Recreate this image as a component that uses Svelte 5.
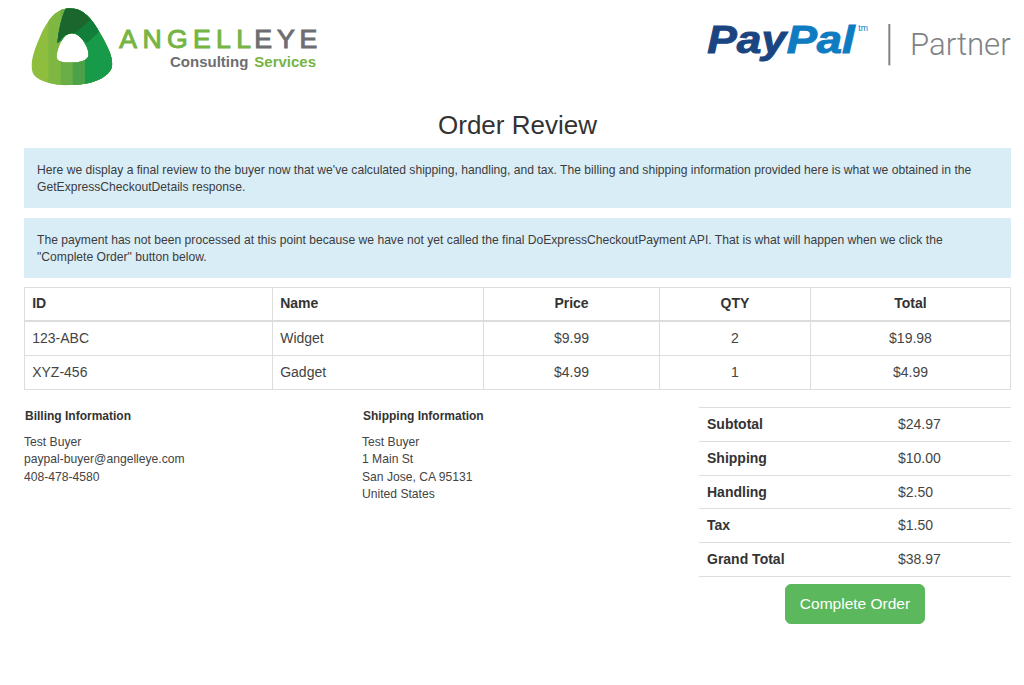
<script>
  const items = [
    { id: '123-ABC', name: 'Widget', price: '$9.99', qty: 2, total: '$19.98' },
    { id: 'XYZ-456', name: 'Gadget', price: '$4.99', qty: 1, total: '$4.99' }
  ];
  const totals = [
    ['Subtotal', '$24.97'],
    ['Shipping', '$10.00'],
    ['Handling', '$2.50'],
    ['Tax', '$1.50'],
    ['Grand Total', '$38.97']
  ];
</script>

<div class="page">
  <header class="top">
    <svg class="logo" viewBox="0 0 930 300" aria-label="Angell Eye Consulting Services">
      <defs>
        <clipPath id="outer">
          <path clip-rule="evenodd" d="M150 25C110 25 85 55 60 110C35 165 28 205 42 225C58 246 110 258 155 255C200 255 255 240 272 210C285 188 270 150 240 100C215 55 190 25 150 25ZM155 100C140 100 125 115 115 145C108 168 106 180 125 185C145 190 175 188 190 182C210 175 208 160 200 140C185 110 170 100 155 100Z" />
        </clipPath>
      </defs>
      <g clip-path="url(#outer)">
        <rect x="20" y="0" width="280" height="300" fill="#8fbe3f" />
        <rect x="85" y="0" width="215" height="300" fill="#7fb743" />
        <rect x="122" y="0" width="178" height="300" fill="#6bad47" />
        <rect x="158" y="0" width="142" height="300" fill="#4ba248" />
        <rect x="195" y="0" width="105" height="300" fill="#189a4b" />
        <path d="M112 130C116 90 124 50 140 20L300 20L300 70L240 95L195 135L160 100Z" fill="#189a4b" />
        <path d="M112 130C116 90 124 50 140 20L230 20L240 93L200 130L165 100L135 105Z" fill="#117f3a" />
        <path d="M112 130C116 90 124 50 140 20L190 20L210 60L165 100L135 105Z" fill="#1a662d" />
      </g>
      <text class="angell green" x="298" y="145" textLength="395" lengthAdjust="spacing">ANGELL</text>
      <text class="angell grey" x="703" y="145" textLength="189" lengthAdjust="spacing">EYE</text>
      <text class="consult" x="450" y="200" textLength="235" lengthAdjust="spacingAndGlyphs" fill="#6d6e71">Consulting</text>
      <text class="consult" x="703" y="200" textLength="185" lengthAdjust="spacingAndGlyphs" fill="#76b444">Services</text>
    </svg>
    <svg class="partner" viewBox="0 0 1002 210" aria-label="PayPal Partner">
      <text class="pp blue" x="52" y="130" textLength="236" lengthAdjust="spacingAndGlyphs">Pay</text>
      <text class="pp sky" x="290" y="130" textLength="204" lengthAdjust="spacingAndGlyphs">Pal</text>
      <text class="tm" x="505" y="62" fill="#0f7cc1">tm</text>
      <rect x="595" y="42" width="6" height="124" fill="#808285" />
      <text class="pt" x="660" y="135" textLength="302" lengthAdjust="spacingAndGlyphs" fill="#808285">Partner</text>
    </svg>
  </header>

  <h1>Order Review</h1>

  <div class="alert">Here we display a final review to the buyer now that we've calculated shipping, handling, and tax. The billing and shipping information provided here is what we obtained in the GetExpressCheckoutDetails response.</div>
  <div class="alert">The payment has not been processed at this point because we have not yet called the final DoExpressCheckoutPayment API. That is what will happen when we click the "Complete Order" button below.</div>

  <table class="items">
    <colgroup>
      <col class="c1" /><col class="c2" /><col class="c3" /><col class="c4" /><col class="c5" />
    </colgroup>
    <thead>
      <tr><th>ID</th><th>Name</th><th class="mid">Price</th><th class="mid">QTY</th><th class="mid">Total</th></tr>
    </thead>
    <tbody>
      {#each items as it}
        <tr><td>{it.id}</td><td>{it.name}</td><td class="mid">{it.price}</td><td class="mid">{it.qty}</td><td class="mid">{it.total}</td></tr>
      {/each}
    </tbody>
  </table>

  <div class="bottom">
    <section>
      <h5>Billing Information</h5>
      <p>Test Buyer<br />paypal-buyer@angelleye.com<br />408-478-4580</p>
    </section>
    <section>
      <h5>Shipping Information</h5>
      <p>Test Buyer<br />1 Main St<br />San Jose, CA 95131<br />United States</p>
    </section>
    <section class="right">
      <table class="totals">
        <tbody>
          {#each totals as [label, value]}
            <tr><th>{label}</th><td>{value}</td></tr>
          {/each}
        </tbody>
      </table>
      <button type="button">Complete Order</button>
    </section>
  </div>
</div>

<style>
  :global(body) {
    margin: 0;
    background: #fff;
  }
  .page {
    box-sizing: border-box;
    width: 1024px;
    height: 685px;
    padding: 0 13px 0 24px;
    font-family: "Liberation Sans", Arial, sans-serif;
    color: #444;
    overflow: hidden;
  }
  .top {
    display: flex;
    justify-content: space-between;
    align-items: flex-start;
    height: 100px;
    margin: 0 -13px 0 -4px;
  }
  .logo {
    width: 310px;
    height: 100px;
    display: block;
  }
  .partner {
    width: 334px;
    height: 70px;
    margin-top: 10px;
    display: block;
  }
  .angell {
    font-size: 80px;
    font-weight: 400;
    stroke-width: 3px;
  }
  .green {
    fill: #76b444;
    stroke: #76b444;
  }
  .grey {
    fill: #6d6e71;
    stroke: #6d6e71;
  }
  .consult {
    font-size: 46px;
    font-weight: 700;
  }
  .pp {
    font-size: 118px;
    font-weight: 700;
    font-style: italic;
    stroke-width: 3px;
  }
  .blue {
    fill: #1a4580;
    stroke: #1a4580;
  }
  .sky {
    fill: #0f7cc1;
    stroke: #0f7cc1;
  }
  .tm {
    font-size: 26px;
  }
  .pt {
    font-family: Roboto, "Liberation Sans", sans-serif;
    font-size: 94px;
    font-weight: 300;
  }
  h1 {
    margin: 10px 0 8px;
    font-size: 26px;
    font-weight: 400;
    line-height: 30px;
    text-align: center;
    color: #333;
  }
  .alert {
    background: #d9edf7;
    padding: 14px 13px 0;
    margin-bottom: 10px;
    font-size: 12.13px;
    line-height: 17px;
    height: 60px;
    box-sizing: border-box;
    color: #3c3c3c;
  }
  .alert + .alert {
    margin-bottom: 9px;
  }
  table {
    border-collapse: collapse;
    width: 100%;
    table-layout: fixed;
  }
  .items {
    font-size: 14px;
    width: 987px;
  }
  .c1 { width: 248px; }
  .c2 { width: 211px; }
  .c3 { width: 176px; }
  .c4 { width: 151px; }
  .c5 { width: 200px; }
  .items th,
  .items td {
    border: 1px solid #ddd;
    padding: 6px 7.2px 7px;
    line-height: 20px;
    text-align: left;
  }
  .items thead th {
    border-bottom-width: 2px;
    padding: 5px 7.2px 7px;
    color: #333;
  }
  .items .mid {
    text-align: center;
  }
  .bottom {
    display: grid;
    grid-template-columns: 338px 337px 312px;
    margin-top: 17px;
  }
  h5 {
    margin: 1px 0 9px;
    padding-left: 1px;
    font-size: 12px;
    line-height: 17px;
    font-weight: 700;
    color: #333;
  }
  p {
    margin: 0;
    font-size: 12.13px;
    line-height: 17.3px;
  }
  .right {
    display: flex;
    flex-direction: column;
    align-items: center;
  }
  .totals {
    font-size: 14px;
  }
  .totals th,
  .totals td {
    border-top: 1px solid #ddd;
    border-bottom: 1px solid #ddd;
    padding: 6.1px 8px 6.7px;
    line-height: 20px;
    text-align: left;
  }
  .totals th {
    width: 175px;
    color: #333;
  }
  button {
    margin-top: 7.5px;
    width: 140px;
    height: 40px;
    background: #5cb85c;
    border: 1px solid #5cb85c;
    border-radius: 6px;
    color: #fff;
    font: 400 15.5px/20px "Liberation Sans", Arial, sans-serif;
    padding: 0;
  }
</style>
